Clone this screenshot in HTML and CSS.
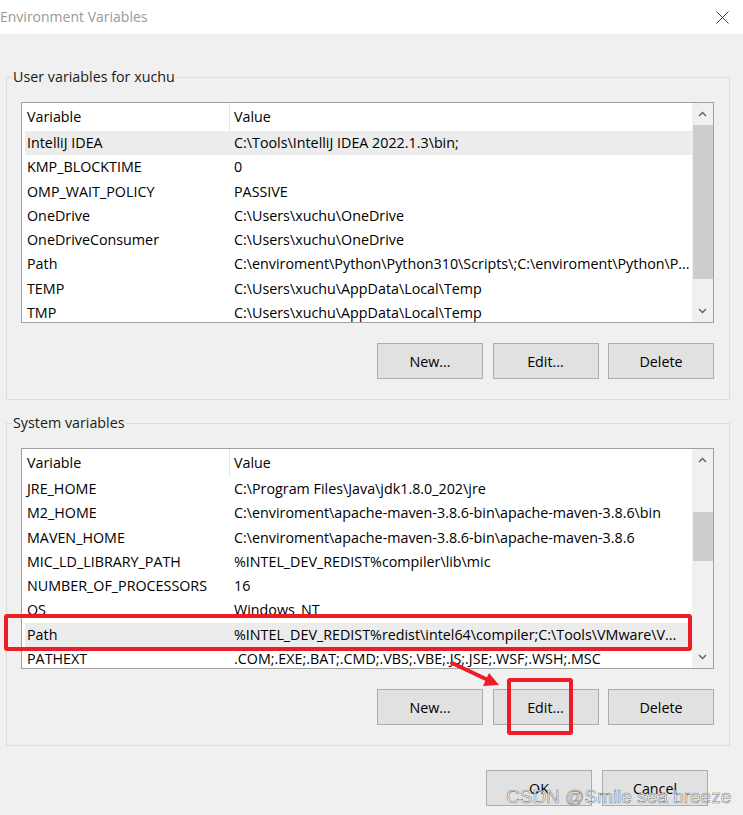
FILE: index.html
```html
<!DOCTYPE html>
<html lang="en">
<head>
<meta charset="utf-8">
<title>Environment Variables</title>
<link rel="stylesheet" href="styles.css">
</head>
<body>
<div class="window">
  <header class="titlebar">
    <span class="title">Environment Variables</span>
    <svg class="close" width="13" height="13" viewBox="0 0 13 13"><path d="M0.5 0.5 L12.5 12.5 M12.5 0.5 L0.5 12.5" stroke="#3c3c3c" stroke-width="1" fill="none"/></svg>
  </header>

  <main class="content">
    <fieldset class="group group-user">
      <legend>User variables for xuchu</legend>
      <div class="list list-user">
        <div class="list-body">
          <div class="hdr"><span class="hcell hvar">Variable</span><span class="hcell hval">Value</span></div>
          <div class="row selected"><span class="cvar">IntelliJ IDEA</span><span class="cval">C:\Tools\IntelliJ IDEA 2022.1.3\bin;</span></div>
          <div class="row"><span class="cvar">KMP_BLOCKTIME</span><span class="cval">0</span></div>
          <div class="row"><span class="cvar">OMP_WAIT_POLICY</span><span class="cval">PASSIVE</span></div>
          <div class="row"><span class="cvar">OneDrive</span><span class="cval">C:\Users\xuchu\OneDrive</span></div>
          <div class="row"><span class="cvar">OneDriveConsumer</span><span class="cval">C:\Users\xuchu\OneDrive</span></div>
          <div class="row"><span class="cvar">Path</span><span class="cval">C:\enviroment\Python\Python310\Scripts\;C:\enviroment\Python\P...</span></div>
          <div class="row"><span class="cvar">TEMP</span><span class="cval">C:\Users\xuchu\AppData\Local\Temp</span></div>
          <div class="row"><span class="cvar">TMP</span><span class="cval">C:\Users\xuchu\AppData\Local\Temp</span></div>
        </div>
        <div class="scrollbar">
          <div class="arrow up"><svg width="9" height="6" viewBox="0 0 9 6"><path d="M1 5 L4.5 1.5 L8 5" stroke="#606060" stroke-width="1.4" fill="none"/></svg></div>
          <div class="track"><div class="thumb thumb-user"></div></div>
          <div class="arrow down"><svg width="9" height="6" viewBox="0 0 9 6"><path d="M1 1 L4.5 4.5 L8 1" stroke="#606060" stroke-width="1.4" fill="none"/></svg></div>
        </div>
      </div>
      <div class="buttons">
        <button class="btn">New...</button>
        <button class="btn">Edit...</button>
        <button class="btn">Delete</button>
      </div>
    </fieldset>

    <fieldset class="group group-system">
      <legend>System variables</legend>
      <div class="list list-system">
        <div class="list-body">
          <div class="hdr"><span class="hcell hvar">Variable</span><span class="hcell hval">Value</span></div>
          <div class="row"><span class="cvar">JRE_HOME</span><span class="cval">C:\Program Files\Java\jdk1.8.0_202\jre</span></div>
          <div class="row"><span class="cvar">M2_HOME</span><span class="cval">C:\enviroment\apache-maven-3.8.6-bin\apache-maven-3.8.6\bin</span></div>
          <div class="row"><span class="cvar">MAVEN_HOME</span><span class="cval">C:\enviroment\apache-maven-3.8.6-bin\apache-maven-3.8.6</span></div>
          <div class="row"><span class="cvar">MIC_LD_LIBRARY_PATH</span><span class="cval">%INTEL_DEV_REDIST%compiler\lib\mic</span></div>
          <div class="row"><span class="cvar">NUMBER_OF_PROCESSORS</span><span class="cval">16</span></div>
          <div class="row"><span class="cvar">OS</span><span class="cval">Windows_NT</span></div>
          <div class="row selected"><span class="cvar">Path</span><span class="cval">%INTEL_DEV_REDIST%redist\intel64\compiler;C:\Tools\VMware\V...</span></div>
          <div class="row"><span class="cvar">PATHEXT</span><span class="cval">.COM;.EXE;.BAT;.CMD;.VBS;.VBE;.JS;.JSE;.WSF;.WSH;.MSC</span></div>
        </div>
        <div class="scrollbar">
          <div class="arrow up"><svg width="9" height="6" viewBox="0 0 9 6"><path d="M1 5 L4.5 1.5 L8 5" stroke="#606060" stroke-width="1.4" fill="none"/></svg></div>
          <div class="track"><div class="thumb thumb-system"></div></div>
          <div class="arrow down"><svg width="9" height="6" viewBox="0 0 9 6"><path d="M1 1 L4.5 4.5 L8 1" stroke="#606060" stroke-width="1.4" fill="none"/></svg></div>
        </div>
      </div>
      <div class="buttons">
        <button class="btn">New...</button>
        <button class="btn">Edit...</button>
        <button class="btn">Delete</button>
      </div>
    </fieldset>

    <div class="dialog-buttons">
      <button class="btn">OK</button>
      <button class="btn">Cancel</button>
    </div>
  </main>

  <div class="mark mark-row"></div>
  <div class="mark mark-edit"></div>
  <svg class="mark-arrow" width="743" height="815" viewBox="0 0 743 815">
    <path d="M452 663 L488 680" stroke="#ee1c25" stroke-width="4" stroke-linecap="round" fill="none"/>
    <path d="M499 685 L483 686 L489 673 Z" fill="#ee1c25"/>
  </svg>
  <div class="watermark">CSDN @Smile sea breeze</div>
</div>
</body>
</html>
```
FILE: styles.css
```css
html, body {
  margin: 0;
  padding: 0;
}
body {
  background: #f0f0f0;
  font-family: "Open Sans", "Noto Sans", sans-serif;
  font-size: 14.3px;
  color: #000;
}
.window {
  position: relative;
  width: 743px;
  height: 815px;
  overflow: hidden;
}
.titlebar {
  height: 34px;
  background: #fff;
  display: flex;
  align-items: center;
  justify-content: space-between;
  padding: 0 14px 2px 0;
  box-sizing: border-box;
}
.title {
  font-size: 14px;
  color: #999;
}
.close {
  display: block;
  margin-top: 2px;
}
.content {
  display: flex;
  flex-direction: column;
}
.group {
  width: 724px;
  box-sizing: border-box;
  margin: 0 0 0 6px;
  padding: 0 15px 20px 14px;
  border: 1px solid #dcdcdc;
  min-width: 0;
}
.group-user { margin-top: 33px; }
.group-system { margin-top: 13px; }
.group legend {
  margin-left: -9px;
  padding: 0 1px;
  line-height: 20px;
  color: #1a1a1a;
}
.list {
  margin-top: 15px;
  width: 693px;
  height: 221px;
  box-sizing: border-box;
  border: 1px solid #a0a0a0;
  background: #fff;
  display: flex;
}
.list-body {
  flex: 1;
  min-width: 0;
  overflow: hidden;
  padding-left: 3px;
}
.hdr {
  display: flex;
  height: 28px;
  align-items: center;
}
.hcell {
  display: block;
  line-height: 28px;
}
.hvar {
  width: 205px;
  box-sizing: border-box;
  padding-left: 2px;
  border-right: 1px solid #e5e5e5;
}
.hval {
  padding-left: 4px;
}
.row {
  display: grid;
  grid-template-columns: 209px 1fr;
  height: 24.3px;
  line-height: 24.3px;
  white-space: nowrap;
}
.row.selected {
  background: #ececec;
}
.cvar {
  padding-left: 2px;
  overflow: hidden;
}
.cval {
  overflow: hidden;
}
.scrollbar {
  width: 21px;
  flex: none;
  background: #f0f0f0;
  display: flex;
  flex-direction: column;
}
.arrow {
  height: 22px;
  flex: none;
  display: flex;
  align-items: center;
  justify-content: center;
}
.arrow svg { display: block; }
.track {
  flex: 1;
  display: flex;
  flex-direction: column;
}
.thumb {
  background: #cdcdcd;
  margin: 0 0 0 1px;
}
.thumb-user {
  height: 154px;
}
.thumb-system {
  margin-top: 41px;
  height: 49px;
}
.buttons {
  display: flex;
  justify-content: flex-end;
  gap: 9.5px;
  margin-top: 20px;
}
.btn {
  width: 106px;
  height: 36px;
  box-sizing: border-box;
  background: #e1e1e1;
  border: 1px solid #adadad;
  border-radius: 0;
  font-family: inherit;
  font-size: 14.3px;
  color: #000;
  padding: 1px 0 0;
}
.dialog-buttons {
  display: flex;
  justify-content: flex-end;
  gap: 10px;
  margin-top: 24px;
  padding-right: 35px;
}
.mark {
  position: absolute;
  border: 4px solid #ee1c25;
  border-radius: 3px;
  box-sizing: border-box;
}
.mark-row {
  left: 4px;
  top: 614px;
  width: 688px;
  height: 37px;
}
.mark-edit {
  left: 507px;
  top: 678px;
  width: 66px;
  height: 57px;
}
.mark-arrow {
  position: absolute;
  left: 0;
  top: 0;
  pointer-events: none;
}
.watermark {
  position: absolute;
  left: 506px;
  top: 785px;
  font-family: "Liberation Sans", Arial, sans-serif;
  font-size: 19px;
  line-height: 24px;
  color: rgba(255, 255, 255, 0.85);
  -webkit-text-stroke: 0.6px rgba(90, 90, 90, 0.8);
  white-space: nowrap;
}
```
